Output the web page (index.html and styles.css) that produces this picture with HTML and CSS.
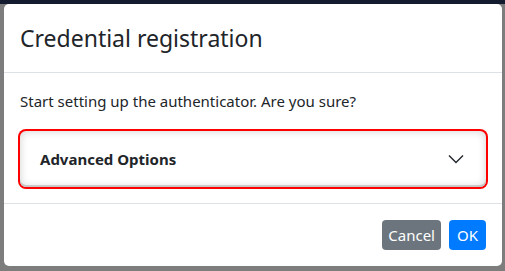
FILE: index.html
```html
<!DOCTYPE html>
<html>
<head>
  <meta charset="UTF-8">
  <meta name="viewport" content="width=device-width, initial-scale=1.0">
  <title>Credential registration</title>
  <link rel="stylesheet" href="styles.css">
</head>
<body>
  <div class="topbar"></div>
  <div class="backdrop">
    <div class="modal">
      <div class="modal-header">
        <h5 class="modal-title">Credential registration</h5>
      </div>
      <div class="modal-body">
        <p class="question">Start setting up the authenticator. Are you sure?</p>
        <div class="accordion">
          <span class="accordion-title">Advanced Options</span>
          <svg class="chevron" width="16" height="10" viewBox="0 0 16 10">
            <path d="M1 1.5 L8 8.5 L15 1.5" fill="none" stroke="#212529" stroke-width="1.4"/>
          </svg>
        </div>
      </div>
      <div class="modal-footer">
        <button class="btn btn-secondary">Cancel</button>
        <button class="btn btn-primary">OK</button>
      </div>
    </div>
  </div>
</body>
</html>
```

FILE: styles.css
```css
body {
  margin: 0;
  width: 505px;
  height: 271px;
  overflow: hidden;
  background: #7d7d7d;
  font-family: "Noto Sans", "Open Sans", sans-serif;
  color: #212529;
}

.topbar {
  height: 4px;
  margin-bottom: -4px;
  background: #141b2e;
}

.backdrop {
  padding: 4px 3px 0 4px;
}

.modal {
  position: relative;
  background: white;
  border-radius: 5px;
  display: flex;
  flex-direction: column;
}

.modal-header {
  padding: 16px;
  border-bottom: 1px solid #dee2e6;
}

.modal-title {
  margin: 0;
  font-size: 23px;
  font-weight: 400;
  line-height: 36px;
}

.modal-body {
  padding: 16px;
}

.question {
  margin: 0 0 18px;
  font-size: 15px;
  line-height: 24px;
}

.accordion {
  display: flex;
  align-items: center;
  justify-content: space-between;
  height: 56px;
  padding: 0 22px 0 20px;
  border-radius: 6px;
  box-shadow: 0 0 0 2px #ff0000, inset 0 0 8px rgba(0, 0, 0, 0.18), inset 0 -2px 0 #d9d9d9;
}

.accordion-title {
  font-size: 15px;
  font-weight: bold;
}

.modal-footer {
  display: flex;
  justify-content: flex-end;
  gap: 8px;
  padding: 16px;
  border-top: 1px solid #dee2e6;
}

.btn {
  font-family: inherit;
  font-size: 15px;
  line-height: 24px;
  padding: 3px 8px;
  border: none;
  border-radius: 4px;
  color: white;
}

.btn-secondary {
  padding: 3px 6px;
  background: #6c757d;
}

.btn-primary {
  background: #007bff;
}
```
